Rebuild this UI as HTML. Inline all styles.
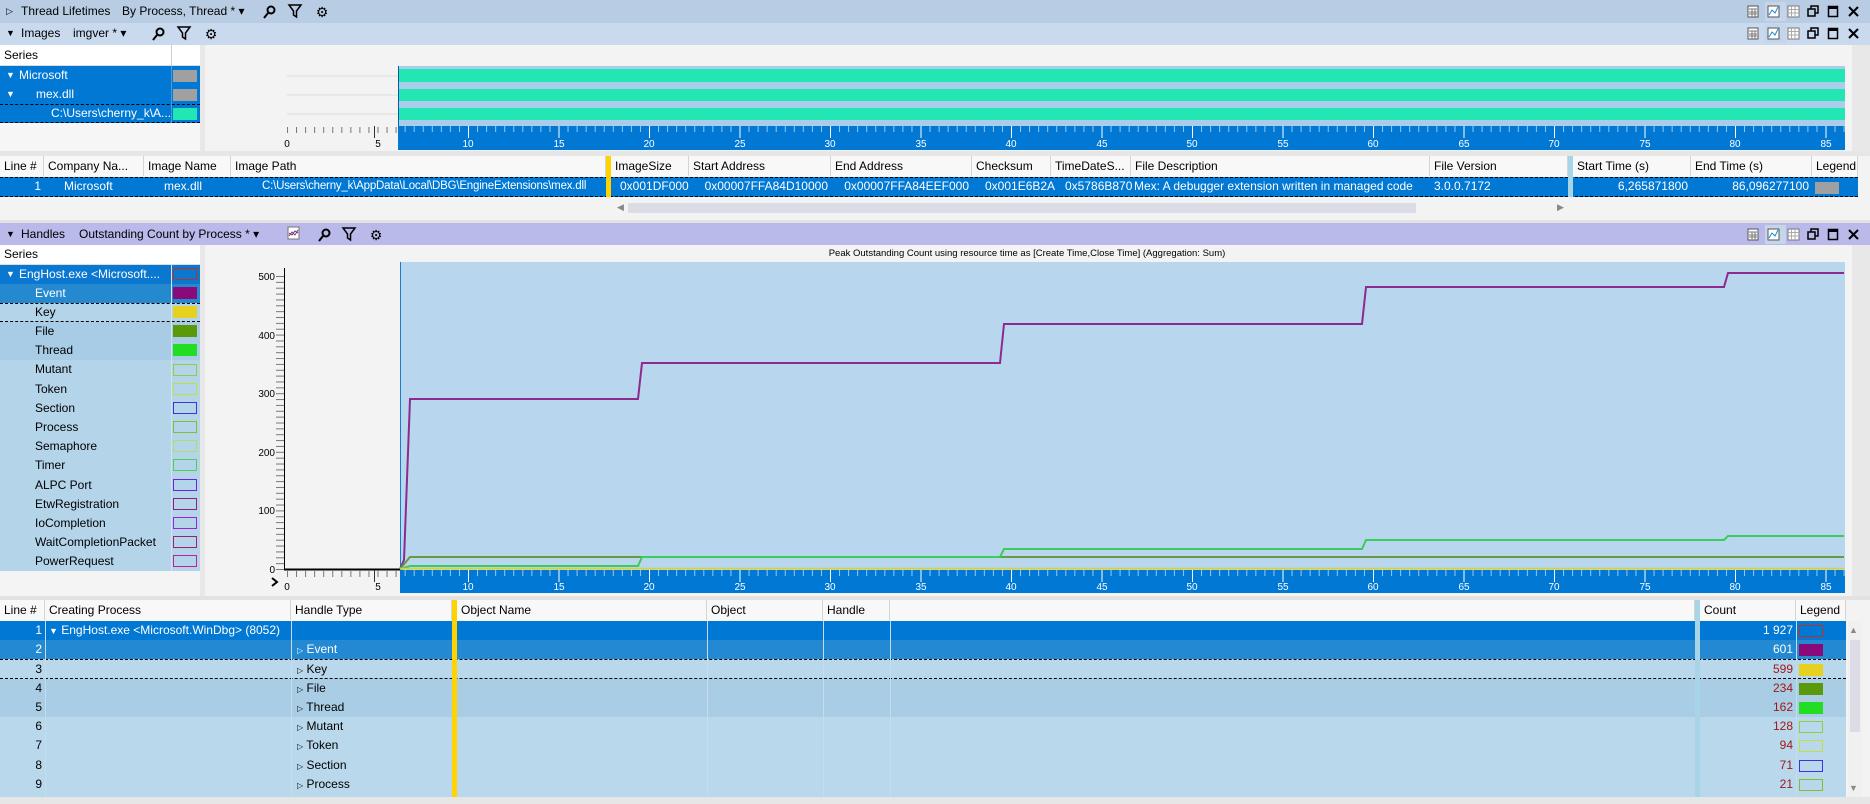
<!DOCTYPE html>
<html><head><meta charset="utf-8">
<style>
*{margin:0;padding:0;box-sizing:border-box}
body{width:1870px;height:804px;overflow:hidden;background:#f3f3f3;font-family:"Liberation Sans",sans-serif;font-size:12px;color:#000;position:relative}
.a{position:absolute}
.t{position:absolute;white-space:nowrap;line-height:19px}
.w{color:#fff}
.hc{position:absolute;top:0;height:20px;border-right:1px solid #d4d4d4;padding-left:4px;line-height:20px;white-space:nowrap;overflow:hidden;background:#f8f8f8}
.r{text-align:right;padding-right:3px}
.sw{position:absolute;width:24px;height:12px}
</style></head><body>

<div class="a" style="left:0;top:0;width:1870px;height:23px;background:#b8cce4"></div>
<div class="a" style="left:0;top:23px;width:1870px;height:22px;background:#c9d9ee"></div>
<div class="t" style="left:6px;top:2px;font-size:9px">▷</div>
<div class="t" style="left:21px;top:2px">Thread Lifetimes</div>
<div class="t" style="left:122px;top:2px">By Process, Thread * ▾</div>
<div class="t" style="left:6px;top:24px;font-size:9px">▼</div>
<div class="t" style="left:21px;top:24px">Images</div>
<div class="t" style="left:73px;top:24px">imgver * ▾</div>

<div class="a" style="left:0;top:220px;width:1870px;height:3px;background:#e2e2e2"></div>
<div class="a" style="left:0;top:223px;width:1870px;height:22px;background:#b9b9ea"></div>
<div class="t" style="left:6px;top:225px;font-size:9px">▼</div>
<div class="t" style="left:21px;top:225px">Handles</div>
<div class="t" style="left:79px;top:225px">Outstanding Count by Process * ▾</div>

<div class="a" style="left:0;top:45px;width:200px;height:106px;background:#f6f6f6"></div>
<div class="a" style="left:0;top:45px;width:200px;height:21px;background:#fff;border-bottom:1px solid #ddd"></div>
<div class="a" style="left:171px;top:45px;width:1px;height:78px;background:#ccc"></div>
<div class="t" style="left:4px;top:46px">Series</div>
<div class="a" style="left:0;top:66px;width:200px;height:57px;background:#0078d4;border-bottom:1px dashed #000"></div>
<div class="a" style="left:0;top:104px;width:200px;height:0;border-top:1px dashed #000"></div>
<div class="a" style="left:171px;top:66px;width:1px;height:57px;background:#4a9ae0"></div>
<div class="t w" style="left:6px;top:66px;font-size:9px">▼</div><div class="t w" style="left:19px;top:66px">Microsoft</div>
<div class="t w" style="left:6px;top:85px;font-size:9px">▼</div><div class="t w" style="left:36px;top:85px">mex.dll</div>
<div class="t w" style="left:51px;top:104px">C:\Users\cherny_k\A...</div>
<div class="sw" style="left:173px;top:70px;background:#a0a0a0"></div>
<div class="sw" style="left:173px;top:89px;background:#a0a0a0"></div>
<div class="sw" style="left:173px;top:108px;background:#22e6b4"></div>
<div class="a" style="left:200px;top:45px;width:5px;height:106px;background:#e8e8e8"></div>

<div class="a" style="left:0;top:245px;width:200px;height:351px;background:#f4f4f4"></div>
<div class="a" style="left:0;top:245px;width:200px;height:20px;background:#fff;border-bottom:1px solid #ddd"></div>
<div class="t" style="left:4px;top:245px">Series</div>
<div class="a" style="left:200px;top:245px;width:5px;height:351px;background:#e8e8e8"></div>
<div class="a" style="left:0;top:265px;width:200px;height:19px;background:#0a78d0"></div>
<div class="a" style="left:0;top:284px;width:200px;height:19px;background:#2589d0"></div>
<div class="a" style="left:0;top:303px;width:200px;height:19px;background:#b4d4ea;border-top:1px dashed #000;border-bottom:1px dashed #000"></div>
<div class="a" style="left:0;top:322px;width:200px;height:38px;background:#a8cbe6"></div>
<div class="a" style="left:0;top:360px;width:200px;height:211px;background:#b4d4ea"></div>
<div class="a" style="left:171px;top:265px;width:1px;height:306px;background:#d0e4f2"></div>
<div class="t w" style="left:6px;top:265px;font-size:9px">▼</div><div class="t w" style="left:19px;top:265px">EngHost.exe &lt;Microsoft....</div>
<div class="t w" style="left:35px;top:284px">Event</div>
<div class="t" style="left:35px;top:303px">Key</div>
<div class="t" style="left:35px;top:322px">File</div>
<div class="t" style="left:35px;top:341px">Thread</div>
<div class="t" style="left:35px;top:360px">Mutant</div>
<div class="t" style="left:35px;top:380px">Token</div>
<div class="t" style="left:35px;top:399px">Section</div>
<div class="t" style="left:35px;top:418px">Process</div>
<div class="t" style="left:35px;top:437px">Semaphore</div>
<div class="t" style="left:35px;top:456px">Timer</div>
<div class="t" style="left:35px;top:476px">ALPC Port</div>
<div class="t" style="left:35px;top:495px">EtwRegistration</div>
<div class="t" style="left:35px;top:514px">IoCompletion</div>
<div class="t" style="left:35px;top:533px">WaitCompletionPacket</div>
<div class="t" style="left:35px;top:552px">PowerRequest</div>
<div class="sw" style="left:173px;top:268px;border:1px solid #c03020"></div>
<div class="sw" style="left:173px;top:287px;background:#8b0a7a"></div>
<div class="sw" style="left:173px;top:306px;background:#e6d020"></div>
<div class="sw" style="left:173px;top:325px;background:#5a9a0a"></div>
<div class="sw" style="left:173px;top:344px;background:#22dd22"></div>
<div class="sw" style="left:173px;top:364px;border:1px solid #90d040"></div>
<div class="sw" style="left:173px;top:383px;border:1px solid #c0e040"></div>
<div class="sw" style="left:173px;top:402px;border:1px solid #4030e0"></div>
<div class="sw" style="left:173px;top:421px;border:1px solid #80c030"></div>
<div class="sw" style="left:173px;top:440px;border:1px solid #b0e060"></div>
<div class="sw" style="left:173px;top:459px;border:1px solid #50d050"></div>
<div class="sw" style="left:173px;top:479px;border:1px solid #7020e0"></div>
<div class="sw" style="left:173px;top:498px;border:1px solid #902080"></div>
<div class="sw" style="left:173px;top:517px;border:1px solid #a020e0"></div>
<div class="sw" style="left:173px;top:536px;border:1px solid #a02070"></div>
<div class="sw" style="left:173px;top:555px;border:1px solid #c020a0"></div>

<div class="a" style="left:1852px;top:45px;width:18px;height:106px;background:#e8e8e8"></div>
<div class="a" style="left:1852px;top:245px;width:18px;height:351px;background:#e8e8e8"></div>

<svg class="a" style="left:0;top:0" width="1870" height="804">
<defs>
<pattern id="mn" x="287" y="0" width="9.05" height="10" patternUnits="userSpaceOnUse"><rect x="0" width="1" height="10" fill="#fff" fill-opacity=".6"/></pattern>
<pattern id="mj" x="287" y="0" width="90.5" height="20" patternUnits="userSpaceOnUse"><rect x="0" width="1" height="20" fill="#fff"/></pattern>
<pattern id="gm" x="287" y="0" width="9.05" height="10" patternUnits="userSpaceOnUse"><rect x="0" width="1" height="10" fill="#777"/></pattern>
<pattern id="yt" x="0" y="276" width="10" height="5.86" patternUnits="userSpaceOnUse"><rect x="0" y="0" width="10" height="1" fill="#777"/></pattern>
</defs>
<line x1="287" y1="76" x2="398" y2="76" stroke="#ddd"/><line x1="287" y1="95" x2="398" y2="95" stroke="#ddd"/><line x1="287" y1="114" x2="398" y2="114" stroke="#ddd"/>
<rect x="398" y="66" width="1447" height="60" fill="#a9cdea"/>
<rect x="398" y="69" width="1447" height="13" fill="#22e6b4"/>
<rect x="398" y="89" width="1447" height="12" fill="#22e6b4"/>
<rect x="398" y="108" width="1447" height="12" fill="#22e6b4"/>
<rect x="398" y="66" width="1" height="84" fill="#0a5aa8"/>
<rect x="398" y="126" width="1447" height="24" fill="#0078d4"/>
<rect x="287" y="127" width="111" height="6" fill="url(#gm)"/>
<rect x="374" y="126" width="1" height="12" fill="#333"/>
<rect x="398" y="126" width="1447" height="6" fill="url(#mn)"/>
<rect x="398" y="126" width="1447" height="12" fill="url(#mj)"/>
<g font-family="Liberation Sans" font-size="10" text-anchor="middle" fill="#fff">
<text x="287" y="147" fill="#000">0</text><text x="378" y="147" fill="#000">5</text>
<text x="468" y="147">10</text><text x="559" y="147">15</text><text x="649" y="147">20</text><text x="740" y="147">25</text><text x="830" y="147">30</text><text x="921" y="147">35</text><text x="1011" y="147">40</text><text x="1102" y="147">45</text><text x="1192" y="147">50</text><text x="1283" y="147">55</text><text x="1373" y="147">60</text><text x="1464" y="147">65</text><text x="1554" y="147">70</text><text x="1645" y="147">75</text><text x="1735" y="147">80</text><text x="1826" y="147">85</text>
</g>
<text x="1027" y="256" font-family="Liberation Sans" font-size="9.5" text-anchor="middle">Peak Outstanding Count using resource time as [Create Time,Close Time] (Aggregation: Sum)</text>
<rect x="400" y="262" width="1445" height="308" fill="#b8d6ee"/>
<rect x="400" y="262" width="1" height="308" fill="#1a7ad0"/>
<rect x="284" y="268" width="1" height="302" fill="#000"/>
<rect x="276" y="276" width="8" height="294" fill="url(#yt)"/>
<line x1="284" y1="569.5" x2="400" y2="569.5" stroke="#000" stroke-width="2"/>
<g font-family="Liberation Sans" font-size="10" text-anchor="end">
<text x="275" y="280">500</text><text x="275" y="339">400</text><text x="275" y="397">300</text><text x="275" y="456">200</text><text x="275" y="514">100</text><text x="275" y="573">0</text>
</g>
<path d="M400,569 L404,560 L410,399 L638,399 L642,363 L1000,363 L1004,324 L1362,324 L1366,287 L1724,287 L1728,273 L1844,273" fill="none" stroke="#8e2a8e" stroke-width="2"/>
<path d="M400,569 L410,557 L1844,557" fill="none" stroke="#6a9a40" stroke-width="2"/>
<path d="M400,569 L410,566 L638,566 L642,557 L1000,557 L1004,549 L1362,549 L1366,540 L1724,540 L1728,536 L1844,536" fill="none" stroke="#3ccc5a" stroke-width="2"/>
<line x1="400" y1="568.5" x2="1844" y2="568.5" stroke="#e0d020" stroke-width="1.5"/>
<rect x="287" y="571" width="111" height="6" fill="url(#gm)"/>
<rect x="374" y="570" width="1" height="12" fill="#333"/>
<rect x="400" y="570" width="1445" height="23" fill="#0078d4"/>
<rect x="400" y="570" width="1445" height="6" fill="url(#mn)"/>
<rect x="400" y="570" width="1445" height="12" fill="url(#mj)"/>
<path d="M272,578 l5,4 l-5,4" fill="none" stroke="#000" stroke-width="2"/>
<g font-family="Liberation Sans" font-size="10" text-anchor="middle" fill="#fff">
<text x="287" y="590" fill="#000">0</text><text x="378" y="590" fill="#000">5</text>
<text x="468" y="590">10</text><text x="559" y="590">15</text><text x="649" y="590">20</text><text x="740" y="590">25</text><text x="830" y="590">30</text><text x="921" y="590">35</text><text x="1011" y="590">40</text><text x="1102" y="590">45</text><text x="1192" y="590">50</text><text x="1283" y="590">55</text><text x="1373" y="590">60</text><text x="1464" y="590">65</text><text x="1554" y="590">70</text><text x="1645" y="590">75</text><text x="1735" y="590">80</text><text x="1826" y="590">85</text>
</g>
<g stroke="#000" fill="none" stroke-width="2">
<circle cx="271" cy="10" r="3.5"/><line x1="268" y1="13" x2="264" y2="18"/>
<path d="M289,5 h12 l-4.5,6 v6 l-3,-2 v-4 z" stroke-width="1.5"/>
<circle cx="160" cy="32" r="3.5"/><line x1="157" y1="35" x2="153" y2="40"/>
<path d="M178,27 h12 l-4.5,6 v6 l-3,-2 v-4 z" stroke-width="1.5"/>
<circle cx="326" cy="233" r="3.5"/><line x1="323" y1="236" x2="319" y2="241"/>
<path d="M343,228 h12 l-4.5,6 v6 l-3,-2 v-4 z" stroke-width="1.5"/>
</g>
<g fill="#000" font-family="DejaVu Sans" font-size="14" text-anchor="middle">
<text x="322" y="17">⚙</text><text x="211" y="39">⚙</text><text x="376" y="240">⚙</text>
</g>
<rect x="288" y="227" width="11" height="12" fill="#fff" stroke="#777"/><path d="M289,236 l3,-4 l3,3 l3,-5" stroke="#d02020" fill="none"/><path d="M289,233 l3,2 l3,-4 l3,2" stroke="#2040d0" fill="none"/>
<g id="wi">
<rect x="1765" y="2" width="21" height="19" fill="#c6d6ea"/>
<rect x="1748" y="6" width="10" height="11" fill="#fff" stroke="#555"/><path d="M1749,9 h8 M1749,12 h8 M1749,14 h8 M1752,9 v8 M1755,9 v8" stroke="#777"/>
<rect x="1768" y="6" width="11" height="11" fill="#fff" stroke="#555"/><path d="M1769,15 l3,-5 l3,3 l3,-6" stroke="#1a8ad0" fill="none"/>
<rect x="1788" y="6" width="11" height="11" fill="#fff" stroke="#777"/><path d="M1788,9.5 h11 M1788,13 h11 M1791.5,6 v11 M1795,6 v11" stroke="#aaa"/>
<rect x="1808" y="9" width="7" height="7" fill="none" stroke="#000" stroke-width="1.5"/><path d="M1811,9 v-3 h7 v7 h-3" fill="none" stroke="#000" stroke-width="1.5"/>
<rect x="1828.5" y="6.5" width="9" height="10" fill="none" stroke="#000" stroke-width="1.5"/><rect x="1828" y="6" width="10" height="3" fill="#000"/>
<path d="M1849,7 l9,9 M1858,7 l-9,9" stroke="#000" stroke-width="2"/>
</g>
<use href="#wi" y="22"/>
<use href="#wi" y="223"/>
</svg>

<div class="a" style="left:0;top:151px;width:1870px;height:5px;background:#e6e6e6"></div>
<div class="a" style="left:0;top:156px;width:1858px;height:20px">
<div class="hc" style="left:0;width:44px">Line #</div>
<div class="hc" style="left:44px;width:100px">Company Na...</div>
<div class="hc" style="left:144px;width:87px">Image Name</div>
<div class="hc" style="left:231px;width:375px">Image Path</div>
<div class="a" style="left:606px;top:0;width:5px;height:41px;background:#ffd200"></div>
<div class="hc" style="left:611px;width:78px">ImageSize</div>
<div class="hc" style="left:689px;width:142px">Start Address</div>
<div class="hc" style="left:831px;width:141px">End Address</div>
<div class="hc" style="left:972px;width:79px">Checksum</div>
<div class="hc" style="left:1051px;width:80px">TimeDateS...</div>
<div class="hc" style="left:1131px;width:299px">File Description</div>
<div class="hc" style="left:1430px;width:138px">File Version</div>
<div class="a" style="left:1568px;top:0;width:5px;height:41px;background:#a8d4e8"></div>
<div class="hc" style="left:1573px;width:118px">Start Time (s)</div>
<div class="hc" style="left:1691px;width:121px">End Time (s)</div>
<div class="hc" style="left:1812px;width:46px">Legend</div>
</div>
<div class="a" style="left:0;top:177px;width:1858px;height:20px;background:#0078d4;border-top:1px dashed #000;border-bottom:1px dashed #000"></div>
<div class="a" style="left:606px;top:177px;width:5px;height:20px;background:#ffd200"></div>
<div class="a" style="left:1568px;top:177px;width:5px;height:20px;background:#a8d4e8"></div>
<div class="t w" style="left:0;top:177px;width:41px;text-align:right">1</div>
<div class="t w" style="left:64px;top:177px">Microsoft</div>
<div class="t w" style="left:164px;top:177px">mex.dll</div>
<div class="t w" style="left:262px;top:177px;font-size:11.5px;letter-spacing:-0.2px">C:\Users\cherny_k\AppData\Local\DBG\EngineExtensions\mex.dll</div>
<div class="t w" style="left:620px;top:177px">0x001DF000</div>
<div class="t w" style="left:694px;top:177px;width:134px;text-align:right">0x00007FFA84D10000</div>
<div class="t w" style="left:836px;top:177px;width:133px;text-align:right">0x00007FFA84EEF000</div>
<div class="t w" style="left:985px;top:177px">0x001E6B2A</div>
<div class="t w" style="left:1065px;top:177px">0x5786B870</div>
<div class="t w" style="left:1134px;top:177px">Mex: A debugger extension written in managed code</div>
<div class="t w" style="left:1434px;top:177px">3.0.0.7172</div>
<div class="t w" style="left:1573px;top:177px;width:115px;text-align:right">6,265871800</div>
<div class="t w" style="left:1691px;top:177px;width:118px;text-align:right">86,096277100</div>
<div class="sw" style="left:1815px;top:182px;background:#a0a0a0"></div>
<div class="a" style="left:628px;top:203px;width:788px;height:10px;background:#dcdce6"></div>
<div class="t" style="left:617px;top:198px;font-size:9px;color:#888">◀</div>
<div class="t" style="left:1557px;top:198px;font-size:9px;color:#888">▶</div>

<div class="a" style="left:0;top:596px;width:1870px;height:4px;background:#e2e2e2"></div>
<div class="a" style="left:0;top:600px;width:1846px;height:20px">
<div class="hc" style="left:0;width:45px">Line #</div>
<div class="hc" style="left:45px;width:246px">Creating Process</div>
<div class="hc" style="left:291px;width:161px">Handle Type</div>
<div class="hc" style="left:457px;width:250px">Object Name</div>
<div class="hc" style="left:707px;width:116px">Object</div>
<div class="hc" style="left:823px;width:67px">Handle</div>
<div class="hc" style="left:890px;width:805px"></div>
<div class="hc" style="left:1700px;width:96px">Count</div>
<div class="hc" style="left:1796px;width:50px">Legend</div>
</div>
<div class="a" style="left:0;top:621px;width:1846px;height:19px;background:#0078d4"></div>
<div class="a" style="left:0;top:640px;width:1846px;height:19px;background:#2389d3"></div>
<div class="a" style="left:0;top:659px;width:1846px;height:20px;background:#b9d8ec;border-top:1px dashed #000;border-bottom:1px dashed #000"></div>
<div class="a" style="left:0;top:679px;width:1846px;height:38px;background:#aacde6"></div>
<div class="a" style="left:0;top:717px;width:1846px;height:80px;background:#b9d8ec"></div>
<div class="a" style="left:45px;top:621px;width:1px;height:176px;background:#c4dcee"></div>
<div class="a" style="left:291px;top:621px;width:1px;height:176px;background:#c4dcee"></div>
<div class="a" style="left:707px;top:621px;width:1px;height:176px;background:#c4dcee"></div>
<div class="a" style="left:823px;top:621px;width:1px;height:176px;background:#c4dcee"></div>
<div class="a" style="left:890px;top:621px;width:1px;height:176px;background:#c4dcee"></div>
<div class="a" style="left:1796px;top:621px;width:1px;height:176px;background:#c4dcee"></div>
<div class="a" style="left:452px;top:600px;width:5px;height:197px;background:#ffd200"></div>
<div class="a" style="left:1695px;top:600px;width:5px;height:197px;background:#a8d4e8"></div>
<div class="a" style="left:0;top:797px;width:1870px;height:7px;background:#e6e6e6"></div>
<div class="a" style="left:1848px;top:621px;width:14px;height:176px;background:#f0f0f0"></div>
<div class="a" style="left:1850px;top:640px;width:10px;height:92px;background:#dcdce6"></div>
<div class="t" style="left:1849px;top:621px;font-size:9px;color:#888">▲</div>
<div class="t" style="left:1849px;top:779px;font-size:9px;color:#888">▼</div>

<div class="t w" style="left:0;top:621px;width:42px;text-align:right">1</div>
<div class="t w" style="left:49px;top:621px"><span style="font-size:9px">▼</span> EngHost.exe &lt;Microsoft.WinDbg&gt; (8052)</div>
<div class="t w" style="left:0;top:640px;width:42px;text-align:right">2</div>
<div class="t" style="left:0;top:660px;width:42px;text-align:right">3</div>
<div class="t" style="left:0;top:679px;width:42px;text-align:right">4</div>
<div class="t" style="left:0;top:698px;width:42px;text-align:right">5</div>
<div class="t" style="left:0;top:717px;width:42px;text-align:right">6</div>
<div class="t" style="left:0;top:736px;width:42px;text-align:right">7</div>
<div class="t" style="left:0;top:756px;width:42px;text-align:right">8</div>
<div class="t" style="left:0;top:775px;width:42px;text-align:right">9</div>
<div class="t w" style="left:297px;top:640px"><span style="font-size:8px">▷</span> Event</div>
<div class="t" style="left:297px;top:660px"><span style="font-size:8px">▷</span> Key</div>
<div class="t" style="left:297px;top:679px"><span style="font-size:8px">▷</span> File</div>
<div class="t" style="left:297px;top:698px"><span style="font-size:8px">▷</span> Thread</div>
<div class="t" style="left:297px;top:717px"><span style="font-size:8px">▷</span> Mutant</div>
<div class="t" style="left:297px;top:736px"><span style="font-size:8px">▷</span> Token</div>
<div class="t" style="left:297px;top:756px"><span style="font-size:8px">▷</span> Section</div>
<div class="t" style="left:297px;top:775px"><span style="font-size:8px">▷</span> Process</div>
<div class="t w" style="left:1700px;top:621px;width:93px;text-align:right">1 927</div>
<div class="t w" style="left:1700px;top:640px;width:93px;text-align:right">601</div>
<div class="t" style="left:1700px;top:660px;width:93px;text-align:right;color:#a01818">599</div>
<div class="t" style="left:1700px;top:679px;width:93px;text-align:right;color:#a01818">234</div>
<div class="t" style="left:1700px;top:698px;width:93px;text-align:right;color:#a01818">162</div>
<div class="t" style="left:1700px;top:717px;width:93px;text-align:right;color:#a01818">128</div>
<div class="t" style="left:1700px;top:736px;width:93px;text-align:right;color:#a01818">94</div>
<div class="t" style="left:1700px;top:756px;width:93px;text-align:right;color:#a01818">71</div>
<div class="t" style="left:1700px;top:775px;width:93px;text-align:right;color:#a01818">21</div>
<div class="sw" style="left:1799px;top:625px;border:1px solid #c03020"></div>
<div class="sw" style="left:1799px;top:644px;background:#8b0a7a"></div>
<div class="sw" style="left:1799px;top:664px;background:#e6d020"></div>
<div class="sw" style="left:1799px;top:683px;background:#5a9a0a"></div>
<div class="sw" style="left:1799px;top:702px;background:#22dd22"></div>
<div class="sw" style="left:1799px;top:721px;border:1px solid #90d040"></div>
<div class="sw" style="left:1799px;top:740px;border:1px solid #c0e040"></div>
<div class="sw" style="left:1799px;top:760px;border:1px solid #4030e0"></div>
<div class="sw" style="left:1799px;top:779px;border:1px solid #80c030"></div>
</body></html>
